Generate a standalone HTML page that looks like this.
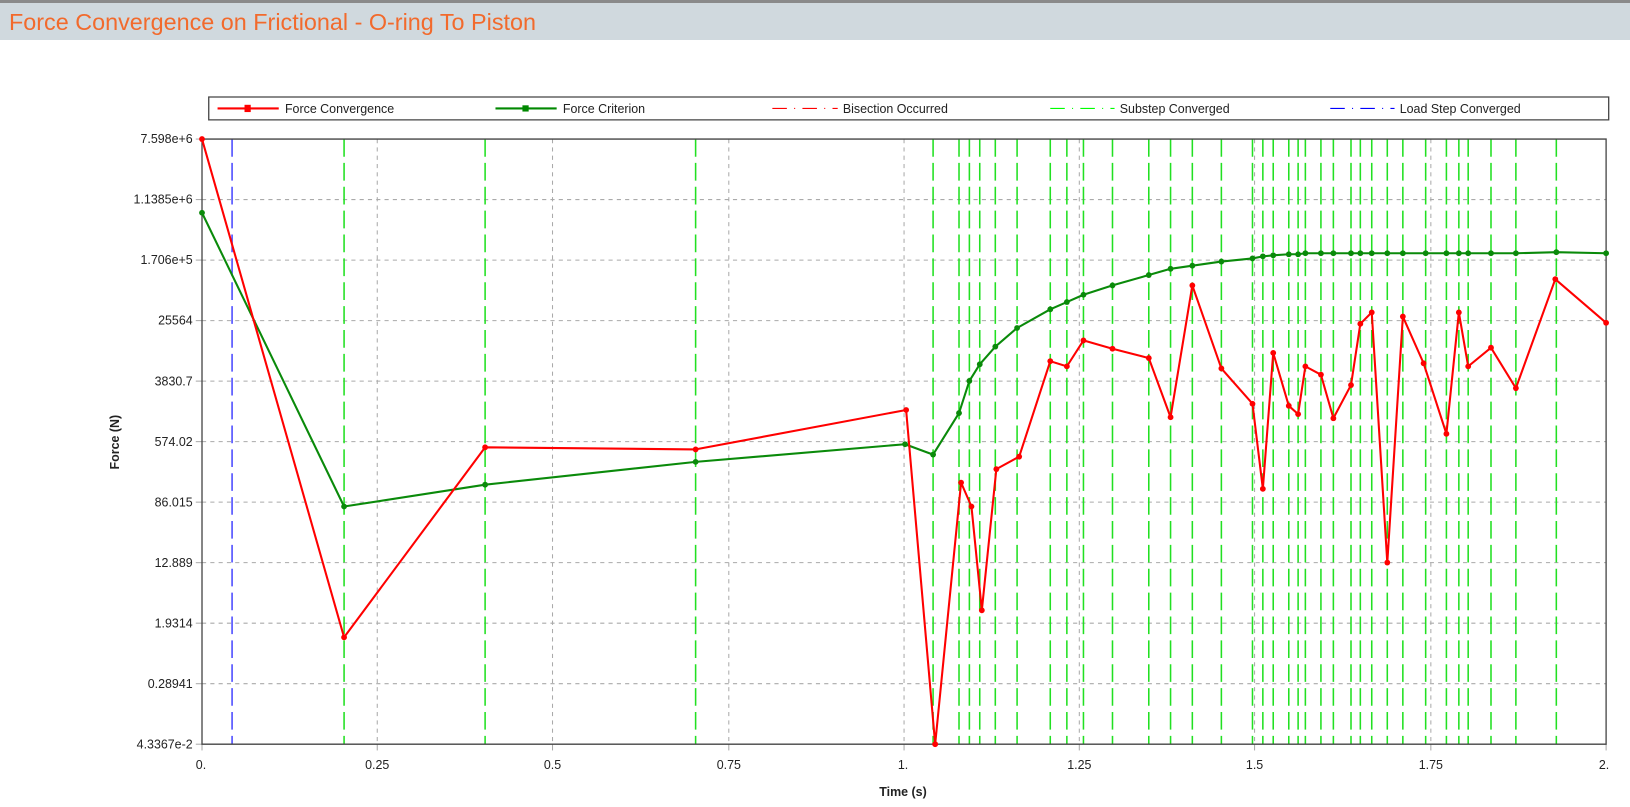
<!DOCTYPE html>
<html><head><meta charset="utf-8"><style>
html,body{margin:0;padding:0;background:#fff;width:1630px;height:807px;overflow:hidden}
svg{display:block}
text{font-family:"Liberation Sans",Arial,sans-serif}
</style></head><body>
<svg width="1630" height="807" viewBox="0 0 1630 807" xmlns="http://www.w3.org/2000/svg">
<rect x="0" y="0" width="1630" height="3" fill="#8a8a8a"/>
<rect x="0" y="3" width="1630" height="37" fill="#d0d9de"/>
<text x="9" y="30" font-size="23" fill="#f26a2c" textLength="527" lengthAdjust="spacingAndGlyphs">Force Convergence on Frictional - O-ring To Piston</text>

<g transform="matrix(1.037 0 0 1.038 2.9 1)">
<!-- legend -->
<rect x="198.5" y="92.5" width="1350" height="22" fill="#fff" stroke="#444" stroke-width="1.3" vector-effect="non-scaling-stroke"/>
<g font-size="12" fill="#222">
<line x1="207" y1="103.5" x2="266" y2="103.5" stroke="#f00" stroke-width="2"/>
<rect x="233" y="100" width="6" height="7" fill="#f00"/>
<text x="272" y="108">Force Convergence</text>
<line x1="475" y1="103.5" x2="534" y2="103.5" stroke="#080" stroke-width="2"/>
<rect x="501" y="100.5" width="6" height="6" fill="#080"/>
<text x="540" y="108">Force Criterion</text>
<line x1="742" y1="103.5" x2="805" y2="103.5" stroke="#f00" stroke-width="1" stroke-dasharray="14,7,1,7"/>
<text x="810" y="108">Bisection Occurred</text>
<line x1="1010" y1="103.5" x2="1072" y2="103.5" stroke="#0f0" stroke-width="1" stroke-dasharray="14,7,1,7"/>
<text x="1077" y="108">Substep Converged</text>
<line x1="1280" y1="103.5" x2="1342" y2="103.5" stroke="#00f" stroke-width="1" stroke-dasharray="14,7,1,7"/>
<text x="1347" y="108">Load Step Converged</text>
</g>

<!-- grid -->
<g stroke="#aaa" stroke-width="1" stroke-dasharray="4,4">
<line x1="192" y1="191.3" x2="1546" y2="191.3"/>
<line x1="192" y1="249.6" x2="1546" y2="249.6"/>
<line x1="192" y1="307.9" x2="1546" y2="307.9"/>
<line x1="192" y1="366.2" x2="1546" y2="366.2"/>
<line x1="192" y1="424.5" x2="1546" y2="424.5"/>
<line x1="192" y1="482.8" x2="1546" y2="482.8"/>
<line x1="192" y1="541.1" x2="1546" y2="541.1"/>
<line x1="192" y1="599.4" x2="1546" y2="599.4"/>
<line x1="192" y1="657.7" x2="1546" y2="657.7"/>
<line x1="361" y1="133" x2="361" y2="716"/>
<line x1="530" y1="133" x2="530" y2="716"/>
<line x1="700" y1="133" x2="700" y2="716"/>
<line x1="869" y1="133" x2="869" y2="716"/>
<line x1="1038" y1="133" x2="1038" y2="716"/>
<line x1="1207" y1="133" x2="1207" y2="716"/>
<line x1="1377" y1="133" x2="1377" y2="716"/>
</g>
<!-- ticks -->
<g stroke="#aaa" stroke-width="1">
<line x1="186" y1="133" x2="192" y2="133"/><line x1="186" y1="191.3" x2="192" y2="191.3"/><line x1="186" y1="249.6" x2="192" y2="249.6"/><line x1="186" y1="307.9" x2="192" y2="307.9"/><line x1="186" y1="366.2" x2="192" y2="366.2"/><line x1="186" y1="424.5" x2="192" y2="424.5"/><line x1="186" y1="482.8" x2="192" y2="482.8"/><line x1="186" y1="541.1" x2="192" y2="541.1"/><line x1="186" y1="599.4" x2="192" y2="599.4"/><line x1="186" y1="657.7" x2="192" y2="657.7"/><line x1="186" y1="716" x2="192" y2="716"/>
<line x1="192" y1="716" x2="192" y2="722"/><line x1="361" y1="716" x2="361" y2="722"/><line x1="530" y1="716" x2="530" y2="722"/><line x1="700" y1="716" x2="700" y2="722"/><line x1="869" y1="716" x2="869" y2="722"/><line x1="1038" y1="716" x2="1038" y2="722"/><line x1="1207" y1="716" x2="1207" y2="722"/><line x1="1377" y1="716" x2="1377" y2="722"/><line x1="1546" y1="716" x2="1546" y2="722"/>
</g>

<!-- green substep lines -->
<g stroke="#22e022" stroke-width="1.5" stroke-dasharray="17,6">
<line x1="329" y1="133" x2="329" y2="716"/><line x1="465" y1="133" x2="465" y2="716"/><line x1="668" y1="133" x2="668" y2="716"/>
<line x1="897" y1="133" x2="897" y2="716"/><line x1="922" y1="133" x2="922" y2="716"/><line x1="932" y1="133" x2="932" y2="716"/><line x1="942" y1="133" x2="942" y2="716"/><line x1="957" y1="133" x2="957" y2="716"/><line x1="978" y1="133" x2="978" y2="716"/><line x1="1010" y1="133" x2="1010" y2="716"/><line x1="1026" y1="133" x2="1026" y2="716"/><line x1="1042" y1="133" x2="1042" y2="716"/><line x1="1070" y1="133" x2="1070" y2="716"/><line x1="1105" y1="133" x2="1105" y2="716"/><line x1="1126" y1="133" x2="1126" y2="716"/><line x1="1147" y1="133" x2="1147" y2="716"/><line x1="1175" y1="133" x2="1175" y2="716"/><line x1="1205" y1="133" x2="1205" y2="716"/><line x1="1215" y1="133" x2="1215" y2="716"/><line x1="1225" y1="133" x2="1225" y2="716"/><line x1="1240" y1="133" x2="1240" y2="716"/><line x1="1249" y1="133" x2="1249" y2="716"/><line x1="1256" y1="133" x2="1256" y2="716"/><line x1="1271" y1="133" x2="1271" y2="716"/><line x1="1283" y1="133" x2="1283" y2="716"/><line x1="1300" y1="133" x2="1300" y2="716"/><line x1="1309" y1="133" x2="1309" y2="716"/><line x1="1320" y1="133" x2="1320" y2="716"/><line x1="1335" y1="133" x2="1335" y2="716"/><line x1="1350" y1="133" x2="1350" y2="716"/><line x1="1372" y1="133" x2="1372" y2="716"/><line x1="1392" y1="133" x2="1392" y2="716"/><line x1="1404" y1="133" x2="1404" y2="716"/><line x1="1413" y1="133" x2="1413" y2="716"/><line x1="1435" y1="133" x2="1435" y2="716"/><line x1="1459" y1="133" x2="1459" y2="716"/><line x1="1498" y1="133" x2="1498" y2="716"/>
</g>
<line x1="221" y1="133" x2="221" y2="716" stroke="#4a4aff" stroke-width="1.5" stroke-dasharray="17,6"/>

<!-- axes box -->
<rect x="192" y="133" width="1354" height="583" fill="none" stroke="#444" stroke-width="1.3" vector-effect="non-scaling-stroke"/>

<!-- green series -->
<polyline fill="none" stroke="#0a8a0a" stroke-width="2" stroke-linejoin="round" points="192,204 329,487 465,466 668,444 870,427 897,437 922,397 932,366 942,350 957,333 978,315 1010,297 1026,290 1042,283 1070,274 1105,264 1126,258 1147,255 1175,251 1205,248 1215,246 1225,245 1240,244 1249,244 1256,243 1271,243 1283,243 1300,243 1309,243 1320,243 1335,243 1350,243 1372,243 1392,243 1404,243 1413,243 1435,243 1459,243 1498,242 1546,243"/>
<g fill="#0a8a0a">
<circle cx="192" cy="204" r="2.8"/><circle cx="329" cy="487" r="2.8"/><circle cx="465" cy="466" r="2.8"/><circle cx="668" cy="444" r="2.8"/><circle cx="870" cy="427" r="2.8"/><circle cx="897" cy="437" r="2.8"/><circle cx="922" cy="397" r="2.8"/><circle cx="932" cy="366" r="2.8"/><circle cx="942" cy="350" r="2.8"/><circle cx="957" cy="333" r="2.8"/><circle cx="978" cy="315" r="2.8"/><circle cx="1010" cy="297" r="2.8"/><circle cx="1026" cy="290" r="2.8"/><circle cx="1042" cy="283" r="2.8"/><circle cx="1070" cy="274" r="2.8"/><circle cx="1105" cy="264" r="2.8"/><circle cx="1126" cy="258" r="2.8"/><circle cx="1147" cy="255" r="2.8"/><circle cx="1175" cy="251" r="2.8"/><circle cx="1205" cy="248" r="2.8"/><circle cx="1215" cy="246" r="2.8"/><circle cx="1225" cy="245" r="2.8"/><circle cx="1240" cy="244" r="2.8"/><circle cx="1249" cy="244" r="2.8"/><circle cx="1256" cy="243" r="2.8"/><circle cx="1271" cy="243" r="2.8"/><circle cx="1283" cy="243" r="2.8"/><circle cx="1300" cy="243" r="2.8"/><circle cx="1309" cy="243" r="2.8"/><circle cx="1320" cy="243" r="2.8"/><circle cx="1335" cy="243" r="2.8"/><circle cx="1350" cy="243" r="2.8"/><circle cx="1372" cy="243" r="2.8"/><circle cx="1392" cy="243" r="2.8"/><circle cx="1404" cy="243" r="2.8"/><circle cx="1413" cy="243" r="2.8"/><circle cx="1435" cy="243" r="2.8"/><circle cx="1459" cy="243" r="2.8"/><circle cx="1498" cy="242" r="2.8"/><circle cx="1546" cy="243" r="2.8"/>
</g>

<!-- red series -->
<polyline fill="none" stroke="#f00" stroke-width="2" stroke-linejoin="round" points="192,133 329,613 465,430 668,432 871,394 899,716 924,464 934,487 944,587 958,451 980,439 1010,347 1026,352 1042,327 1070,335 1105,344 1126,401 1147,274 1175,354 1205,388 1215,470 1225,339 1240,390 1249,398 1256,352 1271,360 1283,402 1300,370 1309,311 1320,300 1335,541 1350,304 1370,349 1392,417 1404,300 1413,352 1435,334 1459,373 1497,268 1546,310"/>
<g fill="#f00">
<circle cx="192" cy="133" r="2.8"/><circle cx="329" cy="613" r="2.8"/><circle cx="465" cy="430" r="2.8"/><circle cx="668" cy="432" r="2.8"/><circle cx="871" cy="394" r="2.8"/><circle cx="899" cy="716" r="2.8"/><circle cx="924" cy="464" r="2.8"/><circle cx="934" cy="487" r="2.8"/><circle cx="944" cy="587" r="2.8"/><circle cx="958" cy="451" r="2.8"/><circle cx="980" cy="439" r="2.8"/><circle cx="1010" cy="347" r="2.8"/><circle cx="1026" cy="352" r="2.8"/><circle cx="1042" cy="327" r="2.8"/><circle cx="1070" cy="335" r="2.8"/><circle cx="1105" cy="344" r="2.8"/><circle cx="1126" cy="401" r="2.8"/><circle cx="1147" cy="274" r="2.8"/><circle cx="1175" cy="354" r="2.8"/><circle cx="1205" cy="388" r="2.8"/><circle cx="1215" cy="470" r="2.8"/><circle cx="1225" cy="339" r="2.8"/><circle cx="1240" cy="390" r="2.8"/><circle cx="1249" cy="398" r="2.8"/><circle cx="1256" cy="352" r="2.8"/><circle cx="1271" cy="360" r="2.8"/><circle cx="1283" cy="402" r="2.8"/><circle cx="1300" cy="370" r="2.8"/><circle cx="1309" cy="311" r="2.8"/><circle cx="1320" cy="300" r="2.8"/><circle cx="1335" cy="541" r="2.8"/><circle cx="1350" cy="304" r="2.8"/><circle cx="1370" cy="349" r="2.8"/><circle cx="1392" cy="417" r="2.8"/><circle cx="1404" cy="300" r="2.8"/><circle cx="1413" cy="352" r="2.8"/><circle cx="1435" cy="334" r="2.8"/><circle cx="1459" cy="373" r="2.8"/><circle cx="1497" cy="268" r="2.8"/><circle cx="1546" cy="310" r="2.8"/>
</g>

<!-- axis labels -->
<g font-size="12" fill="#222" text-anchor="end">
<text x="183" y="137">7.598e+6</text>
<text x="183" y="195.3">1.1385e+6</text>
<text x="183" y="253.6">1.706e+5</text>
<text x="183" y="311.9">25564</text>
<text x="183" y="370.2">3830.7</text>
<text x="183" y="428.5">574.02</text>
<text x="183" y="486.8">86.015</text>
<text x="183" y="545.1">12.889</text>
<text x="183" y="603.4">1.9314</text>
<text x="183" y="661.7">0.28941</text>
<text x="183" y="720">4.3367e-2</text>
</g>
<g font-size="12" fill="#222" text-anchor="middle">
<text x="191" y="740">0.</text>
<text x="361" y="740">0.25</text>
<text x="530" y="740">0.5</text>
<text x="700" y="740">0.75</text>
<text x="868" y="740">1.</text>
<text x="1038" y="740">1.25</text>
<text x="1207" y="740">1.5</text>
<text x="1377" y="740">1.75</text>
<text x="1544" y="740">2.</text>
<text x="868" y="766" font-weight="bold">Time (s)</text>
<text x="0" y="0" font-weight="bold" transform="translate(112,425) rotate(-90)">Force (N)</text>
</g>
</g>
</svg>
</body></html>
